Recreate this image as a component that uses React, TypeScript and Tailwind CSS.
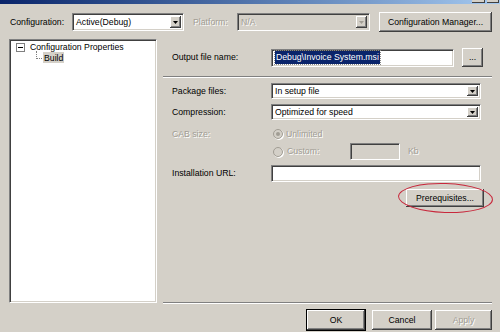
import type { ReactNode } from "react";

const sunken =
  "border-t border-l border-t-[#808080] border-l-[#808080] border-b border-r border-b-white border-r-white shadow-[inset_1px_1px_0_#404040,inset_-1px_-1px_0_#d4d0c8]";
const raised =
  "bg-[#d4d0c8] shadow-[inset_-1px_-1px_0_#404040,inset_1px_1px_0_#fff,inset_-2px_-2px_0_#808080]";
const disabledText = "text-[#a19d94] [text-shadow:1px_1px_0_#fff]";

function Arrow({ disabled = false }: { disabled?: boolean }) {
  return (
    <span
      className={`absolute top-[2px] right-[2px] bottom-[2px] flex w-[11px] items-center justify-center ${raised}`}
    >
      <svg width="5" height="3" viewBox="0 0 5 3">
        <path d="M0 0h5L2.5 3z" fill={disabled ? "#a19d94" : "#000"} />
      </svg>
    </span>
  );
}

function Select({
  value,
  className,
  disabled = false,
}: {
  value: string;
  className: string;
  disabled?: boolean;
}) {
  return (
    <div
      className={`relative flex items-center pl-[3px] ${sunken} ${
        disabled ? "bg-[#d4d0c8] text-[#a19d94]" : "bg-white"
      } ${className}`}
    >
      <span className={disabled ? "[text-shadow:1px_1px_0_#fff]" : ""}>{value}</span>
      <Arrow disabled={disabled} />
    </div>
  );
}

function Button({
  children,
  className,
  isDefault = false,
  disabled = false,
}: {
  children: ReactNode;
  className: string;
  isDefault?: boolean;
  disabled?: boolean;
}) {
  return (
    <div
      className={`flex items-center justify-center ${raised} ${
        isDefault ? "outline outline-1 outline-black" : ""
      } ${disabled ? disabledText : ""} ${className}`}
    >
      {children}
    </div>
  );
}

function Radio({ checked = false }: { checked?: boolean }) {
  return (
    <span className="flex h-[10px] w-[10px] items-center justify-center rounded-full border border-[#a19d94] bg-[#d4d0c8] shadow-[1px_1px_0_#fff]">
      {checked ? <span className="h-[4px] w-[4px] rounded-full bg-[#a19d94]" /> : null}
    </span>
  );
}

export default function App() {
  return (
    <div className="relative h-[332px] w-[500px] overflow-hidden bg-[#d4d0c8] font-['Tahoma','Liberation_Sans',sans-serif] text-[8.7px] leading-none text-black">
      {/* title bar, cut off at the top */}
      <div className="flex h-[4px] bg-gradient-to-r from-[#0a246a] to-[#a6caf0]">
        <div className="ml-auto mr-[1px] flex gap-[2px]">
          <span className="h-[3px] w-[13px] bg-[#d4d0c8] shadow-[inset_-1px_-1px_0_#404040]" />
          <span className="h-[3px] w-[12px] bg-[#d4d0c8] shadow-[inset_-1px_-1px_0_#404040]" />
        </div>
      </div>

      {/* configuration row */}
      <div className="mt-[8px] flex h-[20px] items-center">
        <span className="ml-[10px] w-[62px]">Configuration:</span>
        <Select value="Active(Debug)" className="h-[18px] w-[112px]" />
        <span className={`ml-[9px] w-[44px] ${disabledText}`}>Platform:</span>
        <Select value="N/A" disabled className="h-[18px] w-[133px]" />
        <Button className="ml-[9px] h-[20px] w-[113px]">Configuration Manager...</Button>
      </div>

      <div className="mt-[7px] flex">
        {/* tree */}
        <div className={`ml-[9px] h-[264px] w-[148px] bg-white ${sunken}`}>
          <div className="mt-[3px] flex items-center">
            <span className="ml-[6px] flex h-[9px] w-[9px] items-center justify-center border border-[#808080] bg-white">
              <span className="h-px w-[5px] bg-black" />
            </span>
            <span className="ml-[5px]">Configuration Properties</span>
          </div>
          <div className="flex h-[11px]">
            <span className="ml-[26px] mt-[-1px] h-[8px] w-[6px] border-b border-l border-dotted border-[#808080]" />
            <span className="ml-px bg-[#d4d0c8] px-[1px] pt-[2px]">Build</span>
          </div>
        </div>

        {/* properties */}
        <div className="ml-[6px] w-[329px]">
          <div className="mt-[9px] flex h-[19px] items-center">
            <span className="ml-[9px] w-[99px]">Output file name:</span>
            <div className={`flex h-[18px] w-[183px] items-center bg-white pl-[3px] ${sunken}`}>
              <span className="bg-[#0a246a] px-[1px] py-[2px] text-white outline outline-1 outline-dotted outline-[#888]">
                Debug\Invoice System.msi
              </span>
            </div>
            <Button className="ml-[8px] h-[19px] w-[21px]">...</Button>
          </div>

          <div className="mt-[9px] h-[227px] border-y border-[#808080] shadow-[inset_0_1px_0_#fff,0_1px_0_#fff]">
            <div className="mt-[6px] flex h-[16px] items-center">
              <span className="ml-[9px] w-[99px]">Package files:</span>
              <Select value="In setup file" className="h-[16px] w-[210px]" />
            </div>
            <div className="mt-[5px] flex h-[16px] items-center">
              <span className="ml-[9px] w-[99px]">Compression:</span>
              <Select value="Optimized for speed" className="h-[16px] w-[210px]" />
            </div>
            <div className="mt-[6px] flex h-[16px] items-center">
              <span className={`ml-[9px] w-[101px] ${disabledText}`}>CAB size:</span>
              <Radio checked />
              <span className={`ml-[3px] ${disabledText}`}>Unlimited</span>
            </div>
            <div className="mt-px flex h-[17px] items-center">
              <span className="ml-[110px]">
                <Radio />
              </span>
              <span className={`ml-[4px] w-[63px] ${disabledText}`}>Custom:</span>
              <div className={`h-[17px] w-[50px] bg-[#d4d0c8] ${sunken}`} />
              <span className={`ml-[8px] ${disabledText}`}>Kb</span>
            </div>
            <div className="mt-[5px] flex h-[17px] items-center">
              <span className="ml-[9px] w-[99px]">Installation URL:</span>
              <div className={`h-[17px] w-[210px] bg-white ${sunken}`} />
            </div>
            <div className="mt-[7px] flex justify-end pr-[8px]">
              <div className="relative">
                <Button className="h-[18px] w-[78px]">Prerequisites...</Button>
                <span className="pointer-events-none absolute -top-[6px] -right-[9px] -bottom-[6px] -left-[8px] rotate-[2deg] rounded-[50%] border-[1.5px] border-[#c8283c]" />
              </div>
            </div>
          </div>
        </div>
      </div>

      {/* dialog buttons */}
      <div className="mt-[7px] flex pr-[8px]">
        <Button isDefault className="ml-auto h-[20px] w-[58px]">
          OK
        </Button>
        <Button className="ml-[7px] h-[20px] w-[60px]">Cancel</Button>
        <Button disabled className="ml-[3px] h-[20px] w-[57px]">
          Apply
        </Button>
      </div>
    </div>
  );
}
